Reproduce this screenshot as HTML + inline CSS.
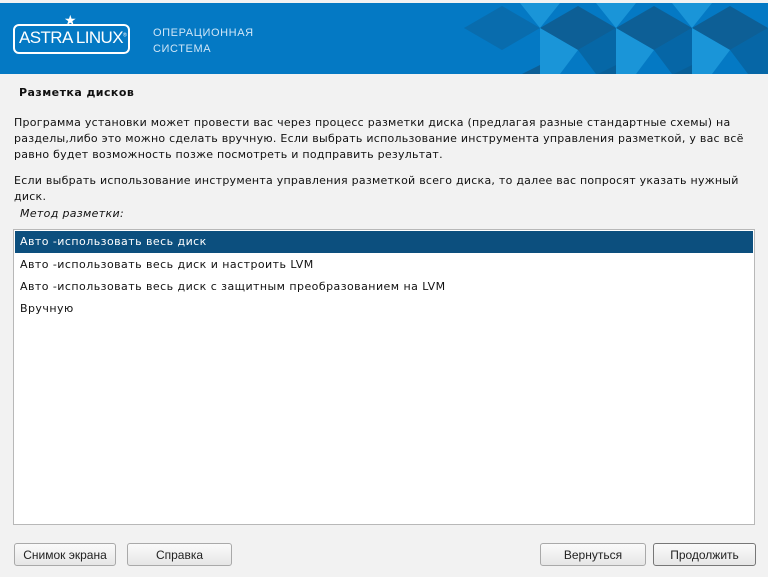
<!DOCTYPE html>
<html><head><meta charset="utf-8"><style>
body{margin:0;width:768px;height:577px;background:#f2f2f2;font-family:"DejaVu Sans","Liberation Sans",sans-serif;color:#111;position:relative;overflow:hidden}
.hdr{position:absolute;left:0;top:3px;width:768px;height:71px;background:#0479c4;overflow:hidden}
.t{position:absolute;font-size:11px;letter-spacing:0.33px;white-space:nowrap}
.list{position:absolute;left:13px;top:229px;width:740px;height:294px;background:#fff;border:1px solid #b8b8b8}
.row{position:absolute;left:1px;width:738px;height:22px;line-height:22px;font-size:11px;letter-spacing:0.45px;padding-left:5px;box-sizing:border-box}
.btn{position:absolute;top:543px;height:23px;border:1px solid #a9a9a9;border-radius:3px;background:linear-gradient(#fafafa,#e6e6e6);font-family:"Liberation Sans",sans-serif;font-size:12px;text-align:center;line-height:23px;box-sizing:border-box;color:#222}
</style></head><body>
<div class="hdr">
<svg width="768" height="71" style="position:absolute;left:0;top:0">
<g>
<g fill="#0d5f96">
<polygon points="502,3 540,25 502,47 464,25" opacity="0.5"/>
<polygon points="578,3 616,25 578,47 540,25"/>
<polygon points="654,3 692,25 654,47 616,25"/>
<polygon points="730,3 768,25 730,47 692,25"/>
<polygon points="540,71 522,71 540,62 558,71"/>
<polygon points="616,71 598,71 616,62 634,71"/>
<polygon points="692,71 674,71 692,62 710,71"/>
</g>
<g fill="#1a95d8">
<polygon points="540,25 578,47 560,71 540,71"/>
<polygon points="616,25 654,47 636,71 616,71"/>
<polygon points="692,25 730,47 712,71 692,71"/>
<polygon points="540,25 520,0 560,0"/>
<polygon points="616,25 596,0 636,0"/>
<polygon points="692,25 672,0 712,0"/>
</g>
<g fill="#075f9a" opacity="0.7">
<polygon points="578,47 616,25 616,71 596,71"/>
<polygon points="654,47 692,25 692,71 672,71"/>
<polygon points="730,47 768,25 768,71 748,71"/>
</g>
</g>
</svg>
<div style="position:absolute;left:13px;top:21px;width:117px;height:30px;border:2px solid #fff;border-radius:6px;box-sizing:border-box"></div>
<div style="position:absolute;left:64px;top:10px;color:#fff;font-size:14px">★</div>
<div style="position:absolute;left:19px;top:25px;color:#fff;font-family:'Liberation Sans',sans-serif;font-size:17px;letter-spacing:-0.6px">ASTRA LINUX<sup style="font-size:5px">®</sup></div>
<div style="position:absolute;left:153px;top:22px;color:#cfe6f7;font-family:'Liberation Sans',sans-serif;font-size:11px;letter-spacing:0.6px;line-height:16px">ОПЕРАЦИОННАЯ<br>СИСТЕМА</div>
</div>
<div class="t" style="left:19px;top:86px;font-weight:bold;font-size:11px;letter-spacing:0.45px">Разметка дисков</div>
<div class="t" style="left:14px;top:115px;line-height:16px;letter-spacing:0.25px">Программа установки может провести вас через процесс разметки диска (предлагая разные стандартные схемы) на<br>разделы,либо это можно сделать вручную. Если выбрать использование инструмента управления разметкой, у вас всё<br>равно будет возможность позже посмотреть и подправить результат.</div>
<div class="t" style="left:14px;top:173px;line-height:16px;letter-spacing:0.25px">Если выбрать использование инструмента управления разметкой всего диска, то далее вас попросят указать нужный<br>диск.</div>
<div class="t" style="left:20px;top:207px;font-style:italic">Метод разметки:</div>
<div class="list">
<div class="row" style="top:1px;background:#0c4f7e;color:#fff">Авто -использовать весь диск</div>
<div class="row" style="top:24px">Авто -использовать весь диск и настроить LVM</div>
<div class="row" style="top:46px">Авто -использовать весь диск с защитным преобразованием на LVM</div>
<div class="row" style="top:68px">Вручную</div>
</div>
<div class="btn" style="left:14px;width:102px">Снимок экрана</div>
<div class="btn" style="left:127px;width:105px">Справка</div>
<div class="btn" style="left:540px;width:106px">Вернуться</div>
<div class="btn" style="left:653px;width:103px;border-color:#777">Продолжить</div>
</body></html>
